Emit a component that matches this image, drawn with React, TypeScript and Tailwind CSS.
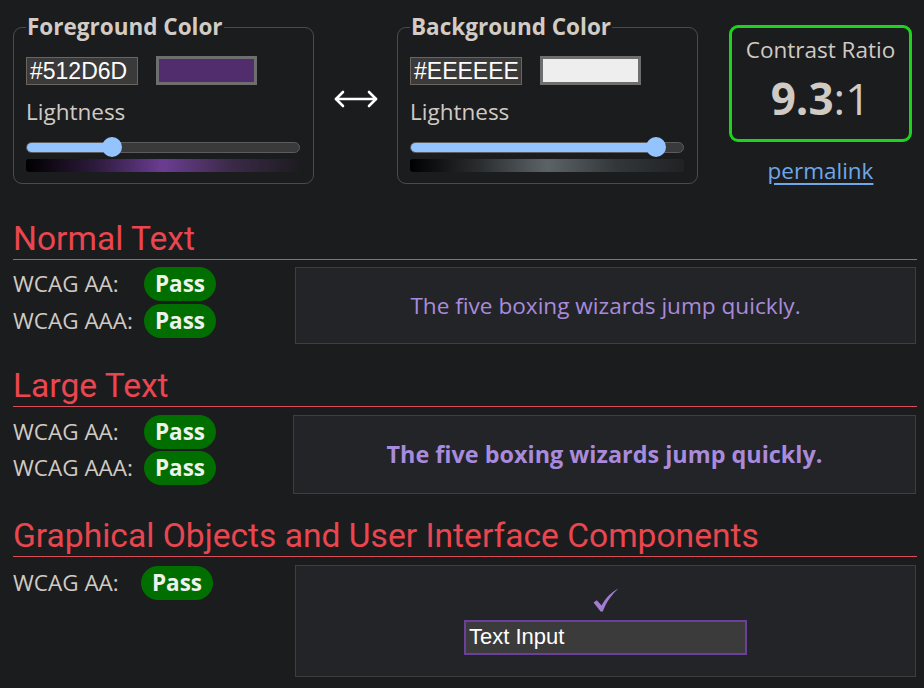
const fg = "#512D6D";
const bg = "#EEEEEE";

type PickerProps = {
  title: string;
  hex: string;
  lightness: number;
  gradient: string;
};

const Picker = ({ title, hex, lightness, gradient }: PickerProps) => {
  return (
    <fieldset className="w-[301px] h-[172px] rounded-[9px] border border-[#4a4b4d] pl-[12px] pr-[13px]">
      <legend className="px-[1px] text-[22.5px] leading-[30px] font-bold text-[#d2ccc5]">{title}</legend>
      <div className="mt-[14px] flex items-center gap-[18px]">
        <div className="w-[112px] h-[28px] bg-[#3a3a3a] border border-[#6b655d] pl-[3px] text-[23px] leading-[26px] text-white font-['Liberation_Sans',Arial,sans-serif]">
          {hex}
        </div>
        <div className="w-[101px] h-[29px] border-[3px] border-[#6e6e6e]" style={{ backgroundColor: hex }} />
      </div>
      <div className="mt-[12px] text-[22.5px] leading-[30px] text-[#d0cac3]">Lightness</div>
      <div className="mt-[10px] relative h-[20px]">
        <div className="absolute left-0 right-0 top-[5px] h-[11px] rounded-full bg-[#3a3a3a] border border-[#5c5c5c] overflow-hidden">
          <div className="h-full bg-[#93c4ff]" style={{ width: `${lightness * 100}%` }} />
        </div>
        <div
          className="absolute top-0 w-[20px] h-[20px] rounded-full bg-[#93c4ff]"
          style={{ left: `calc(${lightness} * (100% - 20px))` }}
        />
      </div>
      <div className="mt-[2px] h-[13px] rounded-[3px]" style={{ background: gradient }} />
    </fieldset>
  );
};

const Pass = () => (
  <span className="inline-flex items-center justify-center w-[72px] h-[34px] rounded-full bg-[#006f00] text-[22.5px] font-bold text-[#eef2ec]">
    Pass
  </span>
);

const Heading = ({ children }: { children: React.ReactNode }) => (
  <h2 className="font-['Roboto',sans-serif] text-[33.6px] leading-[41px] text-[#e9464f] border-b border-[#dc4c57]">
    {children}
  </h2>
);

const Row = ({ label, labelW = "w-[131px]" }: { label: string; labelW?: string }) => (
  <div className="flex items-center h-[34px]">
    <span className={`${labelW} text-[22.5px] leading-[30px] text-[#d0cac3]`}>{label}</span>
    <Pass />
  </div>
);

export default function App() {
  return (
    <div className="min-h-screen bg-[#1b1c1e] font-['Open_Sans',sans-serif] pl-[13px] pr-[7px] pt-[12px] pb-[10px]">
      <div className="flex items-start">
        <Picker
          title="Foreground Color"
          hex={fg}
          lightness={0.3}
          gradient="linear-gradient(to right, #000 0%, #2c1a3b 25%, #6b3d92 50%, #3b2a47 75%, #1d1b20 100%)"
        />
        <div className="w-[83px] h-[174px] flex items-center justify-center">
          <svg width="46" height="20" viewBox="0 0 46 20" fill="none" stroke="#fff" strokeWidth="2.6" strokeLinecap="round" strokeLinejoin="round">
            <path d="M3 10H43" />
            <path d="M10 3L3 10L10 17" />
            <path d="M36 3L43 10L36 17" />
          </svg>
        </div>
        <Picker
          title="Background Color"
          hex={bg}
          lightness={0.93}
          gradient="linear-gradient(to right, #000 0%, #2a2d2f 25%, #5c6367 50%, #33373a 75%, #202224 100%)"
        />
        <div className="ml-[31px] mt-[13px] flex flex-col items-center">
          <div className="w-[183px] h-[117px] rounded-[9px] border-[3px] border-[#1ed31e] flex flex-col items-center pt-[7px]">
            <div className="text-[22.5px] leading-[30px] text-[#d0cac3]">Contrast Ratio</div>
            <div className="mt-[7px] text-[44px] leading-[52px] text-[#d0cac3]">
              <span className="font-bold">9.3</span>:1
            </div>
          </div>
          <a href="#" className="mt-[14px] text-[22.5px] leading-[30px] text-[#6fa7e9] underline underline-offset-[4px]">
            permalink
          </a>
        </div>
      </div>

      <section className="mt-[32px]">
        <Heading>Normal Text</Heading>
        <div className="mt-[7px] flex items-start">
          <div className="w-[282px] flex flex-col gap-[3px]">
            <Row label="WCAG AA:" />
            <Row label="WCAG AAA:" />
          </div>
          <div className="flex-1 h-[77px] mr-[1px] bg-[#232427] border border-[#3d3e40] flex items-center justify-center text-[22.6px] text-[#a98bdc]">
            The five boxing wizards jump quickly.
          </div>
        </div>
      </section>

      <section className="mt-[21px]">
        <Heading>Large Text</Heading>
        <div className="mt-[8px] flex items-start">
          <div className="w-[280px] flex flex-col gap-[2px]">
            <Row label="WCAG AA:" />
            <Row label="WCAG AAA:" />
          </div>
          <div className="flex-1 h-[79px] mr-[1px] bg-[#232427] border border-[#3d3e40] flex items-center justify-center text-[23.4px] font-bold text-[#a98bdc]">
            The five boxing wizards jump quickly.
          </div>
        </div>
      </section>

      <section className="mt-[21px]">
        <Heading>Graphical Objects and User Interface Components</Heading>
        <div className="mt-[8px] flex items-start">
          <div className="w-[282px] pt-[1px]">
            <Row label="WCAG AA:" labelW="w-[128px]" />
          </div>
          <div className="flex-1 h-[112px] mr-[1px] bg-[#232427] border border-[#3d3e40] flex flex-col items-center pt-[22px]">
            <svg width="26" height="24" viewBox="0 0 26 24" fill="#a27dd0">
              <path d="M0.5 14.5L3.8 12.2L8.6 17.6C12.2 10.4 18 4.2 25.5 0.5C19.2 6.2 13.4 13.6 9.8 23.5L7.6 23.5Z" />
            </svg>
            <div className="mt-[8px] w-[283px] h-[35px] bg-[#3b3b3b] border-2 border-[#6c3f9c] pl-[3px] text-[22px] leading-[30px] text-white font-['Liberation_Sans',Arial,sans-serif]">
              Text Input
            </div>
          </div>
        </div>
      </section>
    </div>
  );
}
